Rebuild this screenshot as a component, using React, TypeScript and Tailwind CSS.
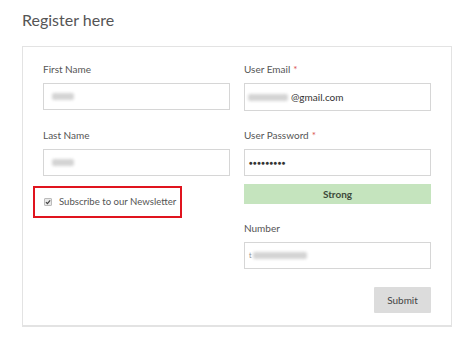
import React from 'react';

const Label: React.FC<{ text: string; required?: boolean }> = ({ text, required }) => (
  <label className="block h-[14px] leading-[14px] text-[10px] text-[#555]">
    {text}
    {required && <span className="text-[#d9534f] ml-[3px]">*</span>}
  </label>
);

const Blur: React.FC<{ w: string }> = ({ w }) => (
  <span className={`inline-block h-[7px] ${w} bg-[#d4d4d4] rounded-[2px] blur-[1.5px]`} />
);

const App: React.FC = () => {
  return (
    <div className="w-[474px] h-[341px] bg-white font-['Lato','Open_Sans',sans-serif] overflow-hidden">
      <h1 className="pl-[22px] pt-[9px] text-[16px] leading-[22px] text-[#555] font-normal">Register here</h1>

      <div className="ml-[22px] mt-[15px] w-[430px] h-[281px] border border-[#e3e3e3] border-b-2 px-[20px] pt-[15px]">
        <div className="grid grid-cols-2 gap-x-[14px]">
          {/* left column */}
          <div className="flex flex-col">
            <Label text="First Name" />
            <div className="mt-[7px] h-[27px] border border-[#d6d6d6] flex items-center px-[8px]">
              <Blur w="w-[22px]" />
            </div>

            <div className="mt-[18px]">
              <Label text="Last Name" />
            </div>
            <div className="mt-[7px] h-[27px] border border-[#d6d6d6] flex items-center px-[8px]">
              <Blur w="w-[22px]" />
            </div>

            <div className="mt-[10px] -ml-[10px] w-[149px] h-[32px] border-2 border-[#e0141e] flex items-center pl-[9px]">
              <span className="w-[8px] h-[8px] bg-[#e9e9e9] border border-[#bbb] rounded-[1px] flex items-center justify-center">
                <svg width="6" height="6" viewBox="0 0 10 10">
                  <path d="M1.5 5.2 L4 7.6 L8.6 2.2" stroke="#444" strokeWidth="2" fill="none" />
                </svg>
              </span>
              <span className="ml-[7px] text-[9.6px] text-[#555] whitespace-nowrap">Subscribe to our Newsletter</span>
            </div>
          </div>

          {/* right column */}
          <div className="flex flex-col">
            <Label text="User Email" required />
            <div className="mt-[7px] h-[28px] border border-[#d6d6d6] flex items-center px-[3px] text-[10px] text-[#333]">
              <Blur w="w-[40px]" />
              <span className="ml-[3px]">@gmail.com</span>
            </div>

            <div className="mt-[17px]">
              <Label text="User Password" required />
            </div>
            <div className="mt-[7px] h-[27px] border border-[#d6d6d6] flex items-center px-[4px] text-[6px] tracking-[0.5px] text-[#333]">
              ●●●●●●●●●
            </div>

            <div className="mt-[8px] h-[20px] bg-[#c5e4be] flex items-center justify-center text-[10px] font-bold text-[#3d4a3b]">
              Strong
            </div>

            <div className="mt-[17px]">
              <Label text="Number" />
            </div>
            <div className="mt-[7px] h-[27px] border border-[#d6d6d6] flex items-center px-[4px]">
              <span className="text-[7px] text-[#888] mr-[1px]">t</span>
              <Blur w="w-[54px]" />
            </div>

            <div className="mt-[18px] flex justify-end">
              <button className="w-[57px] h-[26px] bg-[#dcdcdc] text-[10px] text-[#444] rounded-[1px]">Submit</button>
            </div>
          </div>
        </div>
      </div>
    </div>
  );
};

export default App;
